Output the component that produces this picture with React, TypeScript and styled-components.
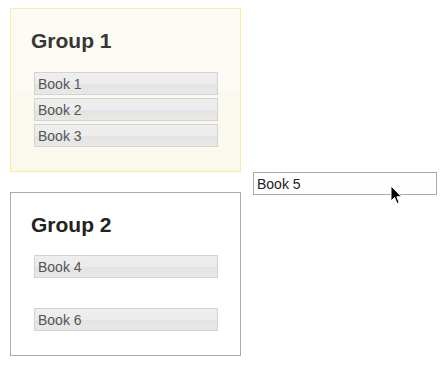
import React from "react";
import styled, { createGlobalStyle } from "styled-components";

const Global = createGlobalStyle`
  html, body { margin: 0; padding: 0; background: #fff; }
  body { font-family: "Liberation Sans", Arial, sans-serif; }
`;

const Page = styled.div`
  position: relative;
  width: 446px;
  height: 365px;
  padding: 8px 10px;
  box-sizing: border-box;
`;

const Group = styled.div<{ $highlight?: boolean }>`
  box-sizing: border-box;
  width: 231px;
  height: 164px;
  margin-bottom: 20px;
  padding: 20px 20px 0;
  border: 1px solid ${(p) => (p.$highlight ? "#f9ec9c" : "#aaaaaa")};
  background: ${(p) =>
    p.$highlight
      ? "linear-gradient(#fcfbf4 0%, #fcfaf2 50%, #fbf9ee 52%, #fbf9ee 100%)"
      : "#ffffff"};
  color: ${(p) => (p.$highlight ? "#363636" : "#222222")};
`;

const Title = styled.h2`
  margin: 0;
  font-size: 21px;
  line-height: 24px;
  font-weight: bold;
`;

const List = styled.ul<{ $top: number }>`
  list-style: none;
  margin: ${(p) => p.$top}px 0 0;
  padding: 0 0 0 3px;
`;

const Book = styled.li`
  box-sizing: border-box;
  width: 184px;
  height: 23px;
  margin-bottom: 3px;
  padding: 1px 3px 0;
  border: 1px solid #d3d3d3;
  background: linear-gradient(#eeeeee 0%, #ececec 50%, #e3e3e3 52%, #e8e8e8 100%);
  color: #555555;
  font-size: 14px;
  line-height: 20px;
  white-space: nowrap;
`;

const Placeholder = styled.li`
  height: 24px;
  margin-bottom: 3px;
`;

const Helper = styled.div`
  position: absolute;
  left: 253px;
  top: 172px;
  box-sizing: border-box;
  width: 184px;
  height: 23px;
  padding: 1px 3px 0;
  border: 1px solid #aaaaaa;
  background: #fefefe;
  color: #222222;
  font-size: 14px;
  line-height: 20px;
`;

const Cursor = styled.svg`
  position: absolute;
  left: 390px;
  top: 185px;
`;

export default function App() {
  return (
    <Page>
      <Global />
      <Group $highlight>
        <Title>Group 1</Title>
        <List $top={19}>
          <Book>Book 1</Book>
          <Book>Book 2</Book>
          <Book>Book 3</Book>
        </List>
      </Group>
      <Group>
        <Title>Group 2</Title>
        <List $top={18}>
          <Book>Book 4</Book>
          <Placeholder />
          <Book>Book 6</Book>
        </List>
      </Group>
      <Helper>Book 5</Helper>
      <Cursor width="14" height="22" viewBox="0 0 14 22">
        <path
          d="M1 1 L1 16 L4.5 12.5 L7 18.5 L9.2 17.6 L6.8 11.8 L11.5 11.8 Z"
          fill="#000"
          stroke="#fff"
          strokeWidth="1"
          strokeLinejoin="round"
        />
      </Cursor>
    </Page>
  );
}
